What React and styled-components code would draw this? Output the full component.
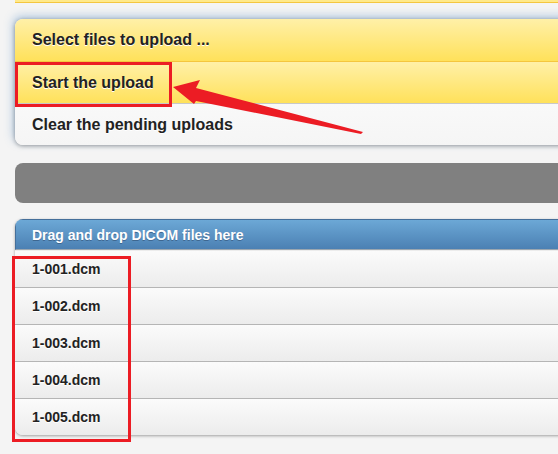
import React from 'react'
import styled, { createGlobalStyle } from 'styled-components'

const Global = createGlobalStyle`
  html, body {
    margin: 0;
    padding: 0;
    background: #f4f4f4;
    overflow: hidden;
  }
  body {
    font-family: "Liberation Sans", Arial, Helvetica, sans-serif;
    color: #222;
  }
`;

const Page = styled.div`
  position: relative;
  width: 558px;
  height: 454px;
  padding-left: 15px;
  box-sizing: border-box;
`;

const TopStrip = styled.div`
  height: 2px;
  margin-right: -20px;
  background: #ffe98a;
  border-bottom: 1px solid #f4c63f;
`;

const Menu = styled.div`
  margin: 16px -20px 0 0;
  border-radius: 8px;
  background: #f9f9f9;
  box-shadow: 0 1px 4px rgba(0, 0, 0, 0.35), -2px -3px 10px rgba(56, 123, 190, 0.35);
  overflow: hidden;
`;

const MenuItem = styled.div`
  height: ${p => p.$first ? 42 : 41}px;
  display: flex;
  align-items: center;
  padding-left: 17px;
  font-size: 16px;
  font-weight: bold;
  text-shadow: 0 1px 0 #fff;
  background: ${p => p.$accent
    ? 'linear-gradient(#fff0a8, #ffe15a)'
    : 'linear-gradient(#f9f9f9, #f5f5f5)'};
  border-top: ${p => p.$first ? 'none' : `1px solid ${p.$accent ? '#f4c63f' : '#c8c8c8'}`};
`;

const Progress = styled.div`
  height: 40px;
  margin: 18px -20px 0 0;
  border-radius: 8px;
  background: #808080;
`;

const List = styled.div`
  margin: 16px -20px 0 0;
  border-radius: 8px;
  overflow: hidden;
  box-shadow: 0 1px 3px rgba(0, 0, 0, 0.35);
`;

const Divider = styled.div`
  height: 29px;
  display: flex;
  align-items: center;
  padding-left: 16px;
  font-size: 14px;
  font-weight: bold;
  color: #fff;
  text-shadow: 0 1px 0 #3e6790;
  background: linear-gradient(#6ca8d6, #4b80b3);
  border: 1px solid #456f9a;
  border-bottom-color: #9aa6b0;
`;

const FileRow = styled.div`
  height: 36px;
  display: flex;
  align-items: center;
  padding-left: 17px;
  font-size: 14px;
  font-weight: bold;
  color: #222;
  text-shadow: 0 1px 0 #fff;
  background: linear-gradient(#fbfbfb, #ececec);
  border-top: 1px solid ${p => p.$first ? 'transparent' : '#b5b5b5'};
`;

const Mark = styled.div`
  position: absolute;
  border: 3px solid #ec1c24;
  box-sizing: border-box;
  pointer-events: none;
`;

const Arrow = styled.svg`
  position: absolute;
  left: 0;
  top: 0;
  pointer-events: none;
`;

const files = ['1-001.dcm', '1-002.dcm', '1-003.dcm', '1-004.dcm', '1-005.dcm']

export default function App() {
  return (
    <Page>
      <Global />
      <TopStrip />
      <Menu>
        <MenuItem $accent $first>Select files to upload ...</MenuItem>
        <MenuItem $accent>Start the upload</MenuItem>
        <MenuItem>Clear the pending uploads</MenuItem>
      </Menu>
      <Progress />
      <List>
        <Divider>Drag and drop DICOM files here</Divider>
        {files.map((f, i) => (
          <FileRow key={f} $first={i === 0}>{f}</FileRow>
        ))}
      </List>

      <Mark style={{ left: 15, top: 62, width: 157, height: 45 }} />
      <Mark style={{ left: 12, top: 256, width: 119, height: 186 }} />
      <Arrow width="558" height="454" viewBox="0 0 558 454">
        <polygon
          fill="#ec1c24"
          points="173,87 200,80 196,88 363,132 361,134 196,101 194,104"
        />
      </Arrow>
    </Page>
  )
}
